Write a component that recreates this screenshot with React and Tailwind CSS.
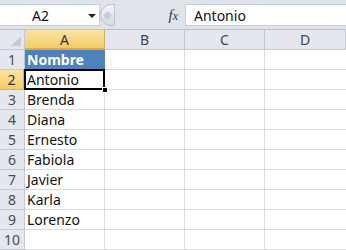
import React from "react";

const names = ["Antonio", "Brenda", "Diana", "Ernesto", "Fabiola", "Javier", "Karla", "Lorenzo", "", ""];

export default function App() {
  const font = { fontFamily: '"Noto Sans", "Open Sans", sans-serif' };
  return (
    <div className="w-[346px] h-[250px] overflow-hidden bg-white" style={font}>
      {/* formula bar */}
      <div className="h-[30px] bg-[#dfe4ea] flex items-start pt-[4px] border-b border-[#b9c1cc]">
        <div className="w-[100px] h-[22px] bg-white border-y border-r border-[#c7ced8] flex items-center relative">
          <span className="ml-[32px] text-[14px] text-[#111]">A2</span>
          <span className="absolute left-[88px] top-[9px] w-0 h-0 border-l-[4px] border-r-[4px] border-t-[4px] border-l-transparent border-r-transparent border-t-[#222]" />
        </div>
        <div className="w-[16px] h-[22px] flex items-center justify-start">
          <div className="w-[15px] h-[22px] rounded-l-full bg-gradient-to-b from-[#f4f6f9] to-[#d5dbe3] border border-[#b9c1cc] flex items-center justify-center">
            <div className="w-[7px] h-[7px] rounded-full bg-[#c9cfd7]" />
          </div>
        </div>
        <div className="flex-1 h-[22px] flex items-center justify-end pr-[7px]">
          <span className="text-[15px] italic text-[#333]" style={{ fontFamily: '"Liberation Serif", serif' }}>
            f<span className="text-[12px]">x</span>
          </span>
        </div>
        <div className="w-[161px] h-[22px] bg-white border-y border-l border-[#c7ced8] flex items-center">
          <span className="ml-[8px] text-[14px] text-[#111]">Antonio</span>
        </div>
      </div>
      {/* grid */}
      <div className="grid grid-cols-[25px_80px_80px_80px_81px] auto-rows-[20px]">
        <div className="h-[20px] bg-[#e4e8ee] border-r border-b border-[#c3c9d2] relative">
          <span className="absolute right-[3px] bottom-[3px] w-0 h-0 border-b-[10px] border-l-[10px] border-b-[#c8ccd2] border-l-transparent" />
        </div>
        <div className="h-[20px] bg-gradient-to-b from-[#fbe3a3] to-[#f6cb6a] border-r border-b-2 border-r-[#d7b05c] border-b-[#e4a83b] flex items-center justify-center text-[14px] text-[#333]">A</div>
        {["B", "C", "D"].map((c) => (
          <div key={c} className="h-[20px] bg-[#e4e8ee] border-r border-b border-[#c3c9d2] flex items-center justify-center text-[14px] text-[#444]">{c}</div>
        ))}
        {names.map((n, i) => {
          const row = i + 1;
          const sel = row === 2;
          return (
            <React.Fragment key={row}>
              <div
                className={
                  sel
                    ? "bg-gradient-to-b from-[#fbe3a3] to-[#f6cb6a] border-r-2 border-b border-r-[#e4a83b] border-b-[#d7b05c] flex items-center justify-center text-[14px] text-[#333]"
                    : "bg-[#e4e8ee] border-r border-b border-[#c3c9d2] flex items-center justify-center text-[14px] text-[#4a4a4a]"
                }
              >
                {row}
              </div>
              {row === 1 ? (
                <div className="bg-[#4f81bd] border-r border-b border-[#4f81bd] flex items-center pl-[2px] text-[14px] font-bold text-white">Nombre</div>
              ) : sel ? (
                <div className="relative border-r border-b border-[#dadada] flex items-center pl-[2px] text-[14px] text-[#111]">
                  Antonio
                  <div className="absolute -left-px -top-px right-[-1px] bottom-[-1px] border-2 border-black pointer-events-none" />
                  <div className="absolute right-[-4px] bottom-[-4px] w-[6px] h-[6px] bg-black border border-white" />
                </div>
              ) : (
                <div className="border-r border-b border-[#dadada] flex items-center pl-[2px] text-[14px] text-[#111]">{names[i - 1] ?? ""}</div>
              )}
              <div className="border-r border-b border-[#dadada]" />
              <div className="border-r border-b border-[#dadada]" />
              <div className="border-b border-[#dadada]" />
            </React.Fragment>
          );
        })}
      </div>
    </div>
  );
}
